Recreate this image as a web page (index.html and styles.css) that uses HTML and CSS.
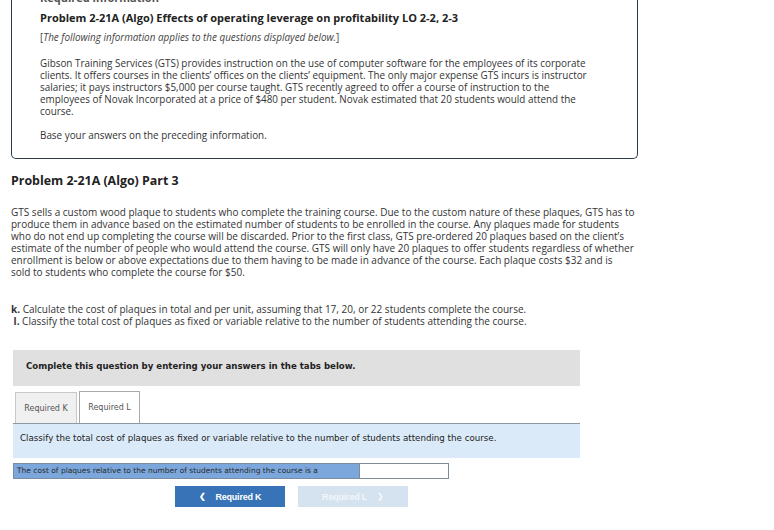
FILE: index.html
```html
<!DOCTYPE html>
<html>
<head>
<meta charset="utf-8">
<link rel="stylesheet" href="styles.css">
</head>
<body>
<div class="page">
  <div class="info-box">
    <div class="req-info">Required information</div>
    <div class="info-title">Problem 2-21A (Algo) Effects of operating leverage on profitability LO 2-2, 2-3</div>
    <div class="info-note">[<i>The following information applies to the questions displayed below.</i>]</div>
    <p class="info-text">Gibson Training Services (GTS) provides instruction on the use of computer software for the employees of its corporate<br>clients. It offers courses in the clients’ offices on the clients’ equipment. The only major expense GTS incurs is instructor<br>salaries; it pays instructors $5,000 per course taught. GTS recently agreed to offer a course of instruction to the<br>employees of Novak Incorporated at a price of $480 per student. Novak estimated that 20 students would attend the<br>course.</p>
    <p class="info-text base">Base your answers on the preceding information.</p>
  </div>

  <div class="part-title">Problem 2-21A (Algo) Part 3</div>
  <p class="part-text">GTS sells a custom wood plaque to students who complete the training course. Due to the custom nature of these plaques, GTS has to<br>produce them in advance based on the estimated number of students to be enrolled in the course. Any plaques made for students<br>who do not end up completing the course will be discarded. Prior to the first class, GTS pre-ordered 20 plaques based on the client’s<br>estimate of the number of people who would attend the course. GTS will only have 20 plaques to offer students regardless of whether<br>enrollment is below or above expectations due to them having to be made in advance of the course. Each plaque costs $32 and is<br>sold to students who complete the course for $50.</p>

  <div class="req-list">
    <div><b>k.</b> Calculate the cost of plaques in total and per unit, assuming that 17, 20, or 22 students complete the course.</div>
    <div>&nbsp;<b>l.</b> Classify the total cost of plaques as fixed or variable relative to the number of students attending the course.</div>
  </div>

  <div class="question">
    <div class="complete-bar">Complete this question by entering your answers in the tabs below.</div>
    <div class="tabs">
      <div class="tab">Required K</div>
      <div class="tab active">Required L</div>
    </div>
    <div class="tab-panel">Classify the total cost of plaques as fixed or variable relative to the number of students attending the course.</div>
    <div class="answer-row">
      <div class="answer-label">The cost of plaques relative to the number of students attending the course is a</div>
      <div class="answer-input"></div>
    </div>
    <div class="nav">
      <div class="btn prev"><span class="chev">&#10094;</span> Required K</div>
      <div class="btn next">Required L <span class="chev">&#10095;</span></div>
    </div>
  </div>
</div>
</body>
</html>
```

FILE: styles.css
```css
html, body {
  margin: 0;
  padding: 0;
  background: #ffffff;
}
body {
  font-family: "Open Sans", Lato, sans-serif;
  color: #333333;
  overflow: hidden;
}
.page {
  width: 774px;
  height: 530px;
  overflow: hidden;
}
.info-box {
  box-sizing: border-box;
  margin: -8px 0 0 11px;
  width: 627px;
  border: 1px solid #2b3a4a;
  border-radius: 0 0 5px 5px;
  border-top: none;
  padding: 0 10px 17px 28px;
}
.req-info {
  font-size: 11px;
  font-weight: bold;
  line-height: 12px;
  color: #555;
}
.info-title {
  margin-top: 7px;
  font-size: 11px;
  font-weight: bold;
  line-height: 14px;
  color: #222;
}
.info-note {
  margin-top: 6px;
  font-size: 9.9px;
  line-height: 12px;
  color: #444;
}
.info-text {
  margin: 14px 0 0 0;
  font-size: 9.9px;
  line-height: 12px;
  color: #333;
  white-space: nowrap;
}
.info-text.base {
  margin-top: 12px;
}
.part-title {
  margin: 14px 0 0 11px;
  font-size: 12.4px;
  font-weight: bold;
  line-height: 16px;
  color: #222;
}
.part-text {
  margin: 17px 0 0 11px;
  font-size: 10px;
  line-height: 12px;
  color: #333;
  white-space: nowrap;
}
.req-list {
  margin: 25px 0 0 11px;
  font-size: 10px;
  line-height: 12px;
  color: #333;
}
.req-list b {
  font-weight: bold;
}
.question {
  margin: 23px 0 0 13px;
  width: 567px;
  font-family: "DejaVu Sans", Verdana, sans-serif;
}
.complete-bar {
  background: #e0e0e0;
  height: 36px;
  box-sizing: border-box;
  padding: 9px 13px;
  font-size: 8.6px;
  font-weight: bold;
  line-height: 14px;
  color: #222;
}
.tabs {
  display: flex;
  gap: 2px;
  margin-top: 5px;
  padding-left: 2px;
  height: 32px;
  align-items: flex-end;
}
.tab {
  box-sizing: border-box;
  height: 31px;
  width: 62px;
  border: 1px solid #c8c8c8;
  border-bottom: none;
  background: #f0f0f0;
  font-size: 8px;
  color: #555;
  display: flex;
  align-items: center;
  justify-content: center;
}
.tab.active {
  background: #ffffff;
  height: 32px;
  width: 61px;
  border-color: #a9a9a9;
}
.tab-panel {
  background: #dbeaf8;
  border-top: 1px solid #8e98a2;
  height: 35px;
  box-sizing: border-box;
  padding: 8px 7px;
  font-size: 8.7px;
  line-height: 12px;
  color: #222;
}
.answer-row {
  display: flex;
  margin-top: 5px;
  width: 436px;
  height: 16px;
}
.answer-label {
  box-sizing: border-box;
  width: 346px;
  background: #7ba7dc;
  border: 1px solid #7c8da0;
  border-right: none;
  font-size: 7.5px;
  line-height: 14px;
  padding-left: 3px;
  color: #2a2a2a;
  white-space: nowrap;
  overflow: hidden;
}
.answer-input {
  flex: 1;
  background: #ffffff;
  border: 1px solid #7f8b96;
}
.nav {
  display: flex;
  gap: 13px;
  margin: 7px 0 0 162px;
}
.btn {
  width: 110px;
  height: 21px;
  font-family: "Liberation Sans", Arial, sans-serif;
  font-size: 9px;
  font-weight: bold;
  display: flex;
  align-items: center;
  justify-content: center;
  gap: 10px;
  letter-spacing: -0.2px;
}
.btn.prev {
  background: #3872b7;
  color: #ffffff;
}
.btn.next {
  background: #d5e2ef;
  color: #f2f6fa;
}
.chev {
  font-size: 8px;
}
```
